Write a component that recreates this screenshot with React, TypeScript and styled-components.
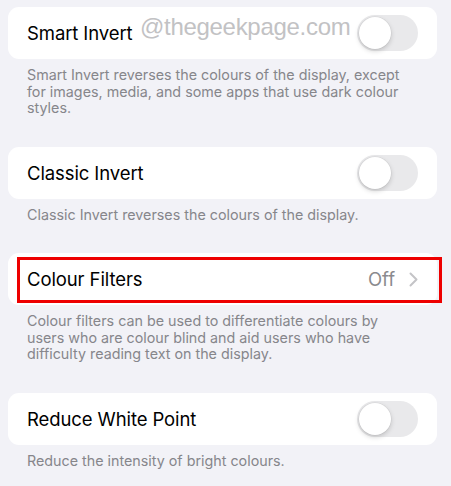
import React from "react";
import styled, { createGlobalStyle } from "styled-components";

const GlobalStyle = createGlobalStyle`
  html, body {
    margin: 0;
    padding: 0;
    background: #f2f2f7;
  }
  body {
    font-family: "Inter", "Liberation Sans", Arial, sans-serif;
    -webkit-font-smoothing: antialiased;
  }
`;

const Page = styled.div`
  position: relative;
  width: 451px;
  height: 486px;
  box-sizing: border-box;
  padding: 7px 14px 0 8px;
  background: #f2f2f7;
  overflow: hidden;
`;

const Section = styled.section`
  margin-bottom: 30px;
`;

const Card = styled.div`
  position: relative;
  height: 52px;
  box-sizing: border-box;
  padding: 0 19px;
  display: flex;
  align-items: center;
  justify-content: space-between;
  background: #ffffff;
  border-radius: 11px;
`;

const Title = styled.span`
  font-size: 18.5px;
  color: #000000;
  letter-spacing: -0.1px;
`;

const Footer = styled.p`
  margin: 0;
  padding: 8px 27px 0 19px;
  font-size: 14.3px;
  line-height: 16.5px;
  color: #86868b;
`;

const Track = styled.div`
  position: relative;
  width: 61px;
  height: 36px;
  border-radius: 18px;
  background: #e9e9eb;
  flex-shrink: 0;
`;

const Knob = styled.div`
  position: absolute;
  top: 2px;
  left: 2px;
  width: 32px;
  height: 32px;
  border-radius: 50%;
  background: #ffffff;
  box-shadow: 0 2px 5px rgba(0, 0, 0, 0.18), 0 0 0 0.5px rgba(0, 0, 0, 0.06);
`;

const Value = styled.div`
  display: flex;
  align-items: center;
  gap: 14px;
  font-size: 18.5px;
  color: #8a8a8e;
`;

const Highlight = styled.div`
  position: absolute;
  left: 9px;
  right: -5px;
  top: 4px;
  bottom: 2px;
  border: 3px solid #ee0000;
  pointer-events: none;
`;

const Watermark = styled.div`
  position: absolute;
  left: 140px;
  top: 13px;
  font-family: "Liberation Sans", Arial, sans-serif;
  font-size: 24px;
  color: #c2c2c4;
  letter-spacing: -0.3px;
`;

const Toggle = () => (
  <Track>
    <Knob />
  </Track>
);

const Chevron = () => (
  <svg width="9" height="15" viewBox="0 0 9 15">
    <path d="M1.5 1.5 L7.5 7.5 L1.5 13.5" fill="none" stroke="#c4c4c7" strokeWidth="2" strokeLinecap="round" strokeLinejoin="round" />
  </svg>
);

export default function App() {
  return (
    <>
      <GlobalStyle />
      <Page>
        <Section>
          <Card>
            <Title>Smart Invert</Title>
            <Toggle />
          </Card>
          <Footer>
            Smart Invert reverses the colours of the display, except for images, media, and some apps that use dark colour
            styles.
          </Footer>
        </Section>
        <Section>
          <Card>
            <Title>Classic Invert</Title>
            <Toggle />
          </Card>
          <Footer>Classic Invert reverses the colours of the display.</Footer>
        </Section>
        <Section>
          <Card>
            <Title>Colour Filters</Title>
            <Value>
              Off
              <Chevron />
            </Value>
            <Highlight />
          </Card>
          <Footer>
            Colour filters can be used to differentiate colours by users who are colour blind and aid users who have
            difficulty reading text on the display.
          </Footer>
        </Section>
        <Section>
          <Card>
            <Title>Reduce White Point</Title>
            <Toggle />
          </Card>
          <Footer>Reduce the intensity of bright colours.</Footer>
        </Section>
        <Watermark>@thegeekpage.com</Watermark>
      </Page>
    </>
  );
}
